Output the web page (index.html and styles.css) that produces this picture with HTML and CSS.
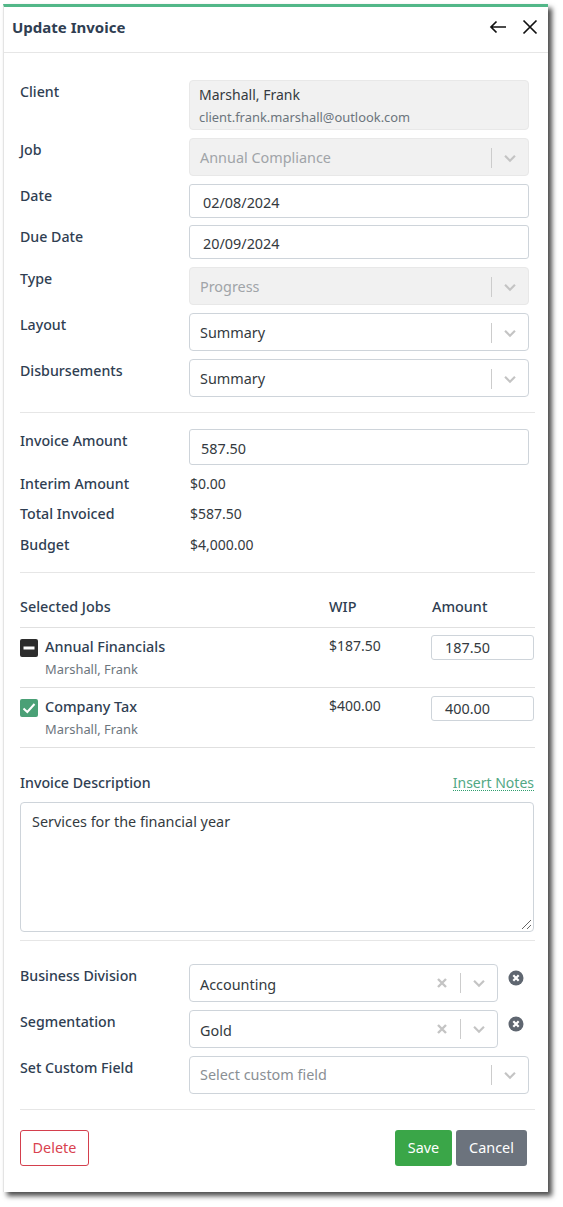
FILE: index.html
```html
<!DOCTYPE html>
<html lang="en">
<head>
    <meta charset="UTF-8">
    <title>Update Invoice</title>
    <link rel="stylesheet" href="styles.css">
</head>
<body>
    <div class="panel">
        <header class="panel-header">
            <h1>Update Invoice</h1>
            <div class="header-icons">
                <svg width="20" height="20" viewBox="0 0 20 20"><path d="M18 10H3M8.500 4.500 3 10l5.500 5.500" fill="none" stroke="#111" stroke-width="1.7"/></svg>
                <svg width="20" height="20" viewBox="0 0 20 20"><path d="M3.500 3.500l13 13M16.500 3.500l-13 13" fill="none" stroke="#111" stroke-width="1.7"/></svg>
            </div>
        </header>

        <div class="panel-body">
            <section class="form-section first">
                <div class="form-row client-row">
                    <label>Client</label>
                    <div class="client-box">
                        <div class="client-name">Marshall, Frank</div>
                        <div class="client-email">client.frank.marshall@outlook.com</div>
                    </div>
                </div>
                <div class="form-row">
                    <label>Job</label>
                    <div class="select disabled"><span class="select-value">Annual Compliance</span><span class="select-sep"></span><svg class="chev" viewBox="0 0 20 20"><path d="M4.500 7.500 10 13l5.500-5.500"/></svg></div>
                </div>
                <div class="form-row date-row">
                    <label>Date</label>
                    <div class="input">02/08/2024</div>
                </div>
                <div class="form-row due-row">
                    <label>Due Date</label>
                    <div class="input">20/09/2024</div>
                </div>
                <div class="form-row">
                    <label>Type</label>
                    <div class="select disabled"><span class="select-value">Progress</span><span class="select-sep"></span><svg class="chev" viewBox="0 0 20 20"><path d="M4.500 7.500 10 13l5.500-5.500"/></svg></div>
                </div>
                <div class="form-row">
                    <label>Layout</label>
                    <div class="select"><span class="select-value">Summary</span><span class="select-sep"></span><svg class="chev" viewBox="0 0 20 20"><path d="M4.500 7.500 10 13l5.500-5.500"/></svg></div>
                </div>
                <div class="form-row">
                    <label>Disbursements</label>
                    <div class="select"><span class="select-value">Summary</span><span class="select-sep"></span><svg class="chev" viewBox="0 0 20 20"><path d="M4.500 7.500 10 13l5.500-5.500"/></svg></div>
                </div>
            </section>

            <section class="amounts">
                <div class="form-row">
                    <label>Invoice Amount</label>
                    <div class="input tall">587.50</div>
                </div>
                <div class="amount-row interim"><label>Interim Amount</label><span>$0.00</span></div>
                <div class="amount-row total"><label>Total Invoiced</label><span>$587.50</span></div>
                <div class="amount-row budget"><label>Budget</label><span>$4,000.00</span></div>
            </section>

            <section class="jobs">
                <div class="jobs-head">
                    <span class="col-name">Selected Jobs</span>
                    <span class="col-wip">WIP</span>
                    <span class="col-amount">Amount</span>
                </div>
                <div class="job-row">
                    <div class="col-name job-name">
                        <span class="check dark"><svg width="18" height="18" viewBox="0 0 18 18"><rect x="3.500" y="7.500" width="11" height="3" fill="#fff"/></svg></span>
                        <div>
                            <div class="job-title">Annual Financials</div>
                            <div class="job-client">Marshall, Frank</div>
                        </div>
                    </div>
                    <div class="col-wip">$187.50</div>
                    <div class="col-amount"><div class="input small">187.50</div></div>
                </div>
                <div class="job-row">
                    <div class="col-name job-name">
                        <span class="check green"><svg width="18" height="18" viewBox="0 0 18 18"><path d="M3.500 9.500 7.300 13l7.200-8" fill="none" stroke="#fff" stroke-width="2"/></svg></span>
                        <div>
                            <div class="job-title">Company Tax</div>
                            <div class="job-client">Marshall, Frank</div>
                        </div>
                    </div>
                    <div class="col-wip">$400.00</div>
                    <div class="col-amount"><div class="input small">400.00</div></div>
                </div>
            </section>

            <section class="description">
                <div class="description-head">
                    <label>Invoice Description</label>
                    <a class="insert-notes">Insert Notes</a>
                </div>
                <div class="textarea">Services for the financial year
                    <svg class="grip" width="11" height="11" viewBox="0 0 11 11"><path d="M1 10 10 1M6 10l4-4" stroke="#666" fill="none"/></svg>
                </div>
            </section>

            <section class="form-section extras">
                <div class="form-row">
                    <label>Business Division</label>
                    <div class="clearable">
                        <div class="select low"><span class="select-value">Accounting</span><svg class="clear" viewBox="0 0 20 20"><path d="M5 5l10 10M15 5 5 15"/></svg><span class="select-sep"></span><svg class="chev" viewBox="0 0 20 20"><path d="M4.500 7.500 10 13l5.500-5.500"/></svg></div>
                        <svg class="remove" width="16" height="16" viewBox="0 0 16 16"><circle cx="8" cy="8" r="7.500" fill="#5f6670"/><path d="M5.300 5.300l5.400 5.400M10.700 5.300l-5.400 5.400" stroke="#fff" stroke-width="2.200"/></svg>
                    </div>
                </div>
                <div class="form-row">
                    <label>Segmentation</label>
                    <div class="clearable">
                        <div class="select low"><span class="select-value">Gold</span><svg class="clear" viewBox="0 0 20 20"><path d="M5 5l10 10M15 5 5 15"/></svg><span class="select-sep"></span><svg class="chev" viewBox="0 0 20 20"><path d="M4.500 7.500 10 13l5.500-5.500"/></svg></div>
                        <svg class="remove" width="16" height="16" viewBox="0 0 16 16"><circle cx="8" cy="8" r="7.500" fill="#5f6670"/><path d="M5.300 5.300l5.400 5.400M10.700 5.300l-5.400 5.400" stroke="#fff" stroke-width="2.200"/></svg>
                    </div>
                </div>
                <div class="form-row">
                    <label>Set Custom Field</label>
                    <div class="select custom"><span class="select-value placeholder">Select custom field</span><span class="select-sep"></span><svg class="chev" viewBox="0 0 20 20"><path d="M4.500 7.500 10 13l5.500-5.500"/></svg></div>
                </div>
            </section>

            <footer class="actions">
                <button class="btn btn-delete">Delete</button>
                <div class="actions-right">
                    <button class="btn btn-save">Save</button>
                    <button class="btn btn-cancel">Cancel</button>
                </div>
            </footer>
        </div>
    </div>
</body>
</html>
```

FILE: styles.css
```css
* {
    box-sizing: border-box;
}

body {
    margin: 0;
    min-height: 1207px;
    padding: 4px 0 0 3px;
    background: #fff;
    font-family: "Noto Sans", "Open Sans", sans-serif;
    font-size: 14.4px;
    color: #343a40;
}

.panel {
    width: 545px;
    height: 1188px;
    background: #fff;
    border-top: 3px solid #52b788;
    border-left: 1px solid #e4e4e4;
    box-shadow: 4px 4px 5px rgba(0, 0, 0, 0.7);
}

.panel-header {
    height: 46px;
    display: flex;
    align-items: center;
    justify-content: space-between;
    padding: 0 8px 6px 8px;
    border-bottom: 1px solid #e6e6e6;
}

.panel-header h1 {
    margin: 0;
    font-size: 15px;
    font-weight: 700;
    color: #2f3e52;
}

.header-icons {
    display: flex;
    gap: 12px;
}

.panel-body {
    padding: 0 13px 0 16px;
}

label {
    font-weight: 500;
    color: #2f3e52;
    font-size: 14.2px;
}

.form-row {
    display: grid;
    grid-template-columns: 169px 340px;
    margin-bottom: 8px;
}

.form-row label {
    padding-top: 2px;
}

.first {
    padding-top: 27px;
}

.client-box {
    height: 50px;
    padding: 4px 9px;
    background: #f1f1f1;
    border: 1px solid #e8e8e8;
    border-radius: 4px;
}

.client-name {
    font-size: 14px;
    line-height: 20px;
}

.client-email {
    font-size: 12.9px;
    line-height: 24px;
    color: #6c757d;
}

.input {
    height: 34px;
    padding: 2px 13px 0;
    display: flex;
    align-items: center;
    background: #fff;
    border: 1px solid #ced4da;
    border-radius: 3px;
}

.input.tall {
    height: 36px;
    padding: 2px 11px 0;
}

.input.small {
    height: 25px;
    width: 103px;
    margin-left: -1px;
    padding: 0 13px;
}

.job-row:nth-child(2) .input.small {
    margin-top: -1px;
}

.due-row {
    margin-top: -1px;
}

.select {
    height: 38px;
    display: flex;
    align-items: center;
    padding: 1px 0 0 10px;
    background: #fff;
    border: 1px solid #ced4da;
    border-radius: 4px;
}

.select.disabled {
    background: #f1f1f1;
    border-color: #e8e8e8;
}

.select.custom {
    padding-top: 0;
}

.placeholder {
    color: #8a8f94;
}

.select.disabled .select-value {
    color: #a0a4a8;
}

.select-value {
    flex: 1;
}

.select-sep {
    width: 1px;
    height: 20px;
    background: #ccc;
}

.chev {
    width: 18px;
    height: 18px;
    margin: 0 9px;
}

.chev path,
.clear path {
    fill: none;
    stroke: #c4c4c4;
    stroke-width: 2.4;
}

.clear path {
    stroke-width: 3;
}

.clear {
    width: 16px;
    height: 16px;
    margin-right: 10px;
}

.low .select-value {
    padding-top: 3px;
}

.amounts {
    border-top: 1px solid #e6e6e6;
    margin-top: 15px;
    padding: 16px 0 12px;
    border-bottom: 1px solid #e6e6e6;
}

.amounts .form-row {
    margin-bottom: 3px;
}

.amount-row {
    display: grid;
    grid-template-columns: 170px 340px;
    height: 30.500px;
    align-items: center;
    font-size: 14px;
}

.jobs {
    padding-top: 24px;
}

.jobs-head,
.job-row {
    display: grid;
    grid-template-columns: 309px 103px 103px;
    border-bottom: 1px solid #e0e0e0;
}

.jobs-head {
    height: 31px;
    font-weight: 500;
    color: #2f3e52;
}

.job-row {
    height: 60px;
    padding-top: 8px;
}

.job-row .col-wip {
    font-size: 14px;
}

.job-name {
    display: flex;
    gap: 8px;
}

.job-name > div {
    margin-left: -1px;
}

.check {
    width: 18px;
    height: 18px;
    margin-top: 3px;
    border-radius: 2px;
}

.check svg {
    display: block;
}

.check.dark {
    background: #2d2d2d;
}

.check.green {
    background: #4aa076;
}

.job-title {
    color: #2f3e52;
    font-weight: 500;
    line-height: 22px;
}

.job-client {
    font-size: 12.9px;
    color: #6c757d;
    line-height: 22px;
}

.description {
    padding-top: 24px;
}

.description-head {
    display: flex;
    justify-content: space-between;
    align-items: center;
    height: 22px;
    margin: 0 1px 8px 0;
}

.insert-notes {
    font-size: 14px;
    color: #52a884;
    border-bottom: 1px dotted #2f9e6e;
    line-height: 15px;
}

.textarea {
    position: relative;
    height: 130px;
    margin-right: 1px;
    padding: 9px 11px;
    border: 1px solid #ced4da;
    border-radius: 4px;
}

.grip {
    position: absolute;
    right: 1px;
    bottom: 1px;
}

.extras {
    border-top: 1px solid #e6e6e6;
    margin-top: 8px;
    padding-top: 23px;
}

.clearable {
    display: flex;
    align-items: flex-start;
}

.clearable .select {
    width: 309px;
}

.remove {
    margin: 6px 0 0 10px;
}

.actions {
    display: flex;
    justify-content: space-between;
    margin-top: 15px;
    padding: 20px 8px 0 0;
    border-top: 1px solid #e6e6e6;
}

.actions-right {
    display: flex;
    gap: 4px;
}

.btn {
    height: 36px;
    font: inherit;
    border-radius: 3px;
    border: 1px solid transparent;
}

.btn-delete {
    width: 69px;
    color: #d9424f;
    background: #fff;
    border-color: #d43f4d;
}

.btn-save {
    width: 57px;
    color: #fff;
    background: #3aa648;
}

.btn-cancel {
    width: 71px;
    color: #fff;
    background: #6c737d;
}
```
